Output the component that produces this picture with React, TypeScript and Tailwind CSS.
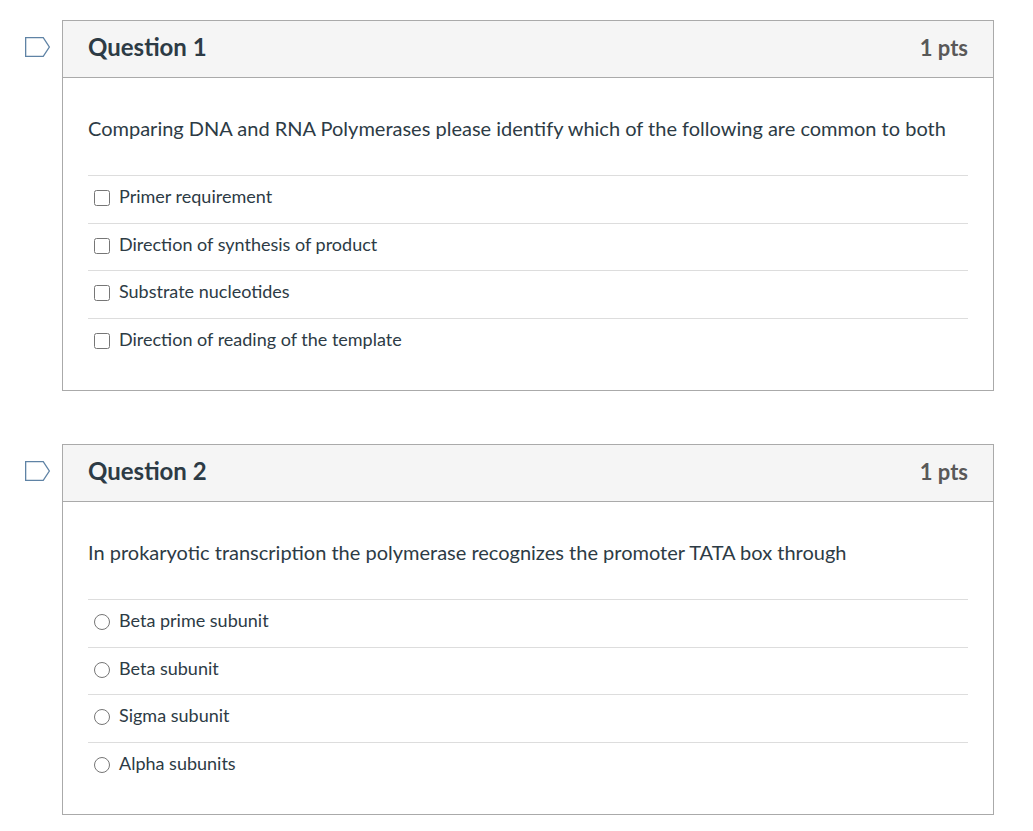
import { useId, useState } from "react";

interface Question {
  title: string;
  points: number;
  prompt: string;
  kind: "checkbox" | "radio";
  answers: string[];
}

const QUESTIONS: Question[] = [
  {
    title: "Question 1",
    points: 1,
    prompt: "Comparing DNA and RNA Polymerases please identify which of the following are common to both",
    kind: "checkbox",
    answers: [
      "Primer requirement",
      "Direction of synthesis of product",
      "Substrate nucleotides",
      "Direction of reading of the template",
    ],
  },
  {
    title: "Question 2",
    points: 1,
    prompt: "In prokaryotic transcription the polymerase recognizes the promoter TATA box through",
    kind: "radio",
    answers: ["Beta prime subunit", "Beta subunit", "Sigma subunit", "Alpha subunits"],
  },
];

function FlagButton({ title }: { title: string }) {
  const [flagged, setFlagged] = useState(false);

  return (
    <button
      type="button"
      aria-label={`Flag ${title}`}
      aria-pressed={flagged}
      className="mt-4 h-6 w-7 shrink-0"
      onClick={() => setFlagged(!flagged)}
    >
      <svg viewBox="0 0 28 24" className="h-6 w-7" fill={flagged ? "#fcd34d" : "#fff"} stroke="#5f83a5" strokeWidth="1.3">
        <path d="M1.65 1.65h17.6l6.1 9.35-6.1 9.35h-17.6z" />
      </svg>
    </button>
  );
}

function QuestionCard({ question }: { question: Question }) {
  const id = useId();

  return (
    <div className="flex items-start gap-2.5">
      <FlagButton title={question.title} />
      <section className="min-w-0 flex-1 border border-[#aaaaaa]">
        <header className="flex h-[57px] items-center justify-between border-b border-[#aaaaaa] bg-[#f5f5f5] px-[25px] pb-1 font-bold">
          <h2 className="text-2xl">{question.title}</h2>
          <span className="text-[22px] text-[#595959]">{question.points} pts</span>
        </header>
        <div className="px-[25px] pt-[35px] pb-[25px]">
          <p id={`${id}-prompt`} className="mb-8 text-xl leading-[30px]">
            {question.prompt}
          </p>
          <div
            role={question.kind === "radio" ? "radiogroup" : "group"}
            aria-labelledby={`${id}-prompt`}
            className="grid min-h-[190px] auto-rows-fr"
          >
            {question.answers.map((answer, i) => (
              <label
                key={answer}
                htmlFor={`${id}-${i}`}
                className="flex items-start gap-[9px] border-t border-[#dddddd] py-1.5 pl-1.5 text-lg leading-7"
              >
                <input id={`${id}-${i}`} type={question.kind} name={id} className="mt-2 size-4 shrink-0" />
                <span>{answer}</span>
              </label>
            ))}
          </div>
        </div>
      </section>
    </div>
  );
}

export default function App() {
  return (
    <main className="flex flex-col gap-[53px] bg-white pt-5 pr-[39px] pb-4 pl-6 font-[Lato,sans-serif] text-[#2d3b45]">
      {QUESTIONS.map((q) => (
        <QuestionCard key={q.title} question={q} />
      ))}
    </main>
  );
}
